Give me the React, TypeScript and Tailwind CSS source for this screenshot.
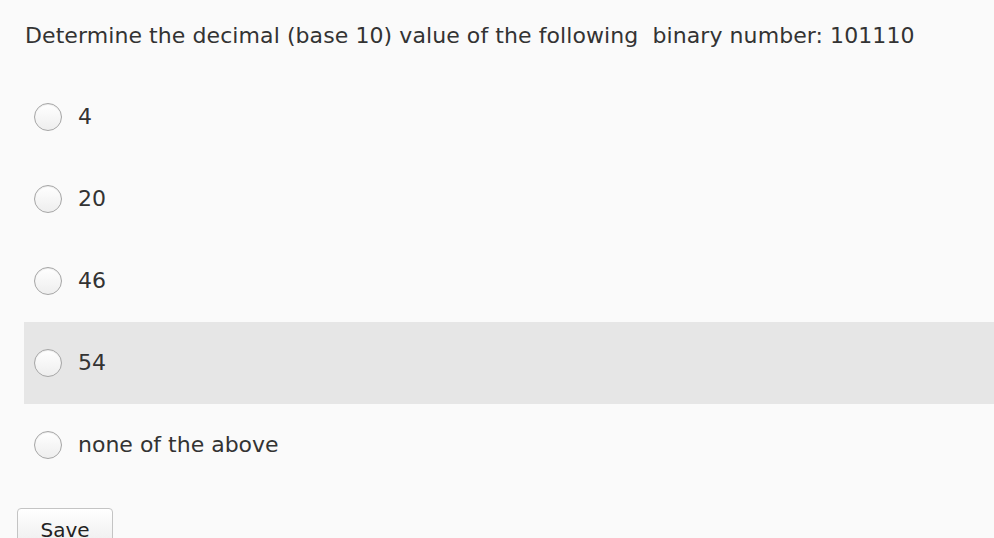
import React from "react";

const options = ["4", "20", "46", "54", "none of the above"];

function Radio() {
  return (
    <span className="inline-block w-[28px] h-[28px] rounded-full border border-[#a6a6a6] bg-gradient-to-b from-white to-[#eeeeee] shadow-[inset_0_1px_1px_rgba(0,0,0,0.08)] shrink-0" />
  );
}

export default function App() {
  return (
    <div
      className="w-[994px] h-[538px] overflow-hidden bg-[#fafafa] text-[#333333]"
      style={{ fontFamily: '"DejaVu Sans", Verdana, sans-serif' }}
    >
      <div className="pl-[25px] pt-[20px] text-[22px] leading-[32px] tracking-[0.08px] whitespace-pre">
        Determine the decimal (base 10) value of the following  binary number: 101110
      </div>
      <div className="mt-[24px] ml-[24px]">
        {options.map((o, i) => (
          <div
            key={o}
            className={`flex items-center h-[82px] pl-[10px] ${i === 3 ? "bg-[#e6e6e6]" : ""}`}
          >
            <Radio />
            <span className="ml-[16px] text-[22px] leading-[32px]">{o}</span>
          </div>
        ))}
      </div>
      <div className="ml-[17px] mt-[22px]">
        <button className="w-[96px] h-[40px] rounded-[4px] border border-[#c4c4c4] bg-gradient-to-b from-white to-[#ededed] text-[20px] text-[#222] leading-[42px] align-top">
          Save
        </button>
      </div>
    </div>
  );
}
